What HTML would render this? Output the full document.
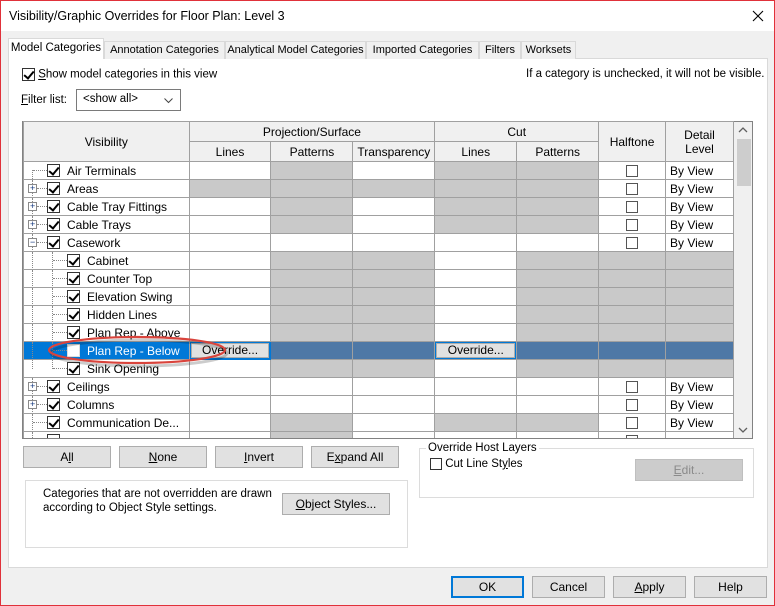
<!DOCTYPE html>
<html><head><meta charset="utf-8"><style>
*{box-sizing:border-box;margin:0;padding:0}
body{width:775px;height:606px;overflow:hidden;background:#f0f0f0;font-family:"Liberation Sans",sans-serif;font-size:12px;color:#000;position:relative}
.abs{position:absolute}
#frame{position:absolute;left:0;top:0;width:775px;height:606px;border:1px solid #e0313a;pointer-events:none;z-index:10}
#title{left:0;top:0;width:775px;height:31px;background:#fff;padding:9px 0 0 9px;font-size:12.5px}
.tab{position:absolute;top:41px;height:18px;border:1px solid #d9d9d9;border-bottom:none;background:#f0f0f0;font-size:11px;text-align:center;line-height:16px;white-space:nowrap;overflow:hidden}
#panel{left:8px;top:58px;width:760px;height:510px;background:#fff;border:1px solid #d9d9d9}
.cb{display:inline-block;width:13px;height:13px;border:1px solid #333;background:#fff;position:relative;vertical-align:middle}
.cb.on::after{content:"";position:absolute;left:3px;top:0px;width:4px;height:8px;border:solid #000;border-width:0 2px 2px 0;transform:rotate(40deg)}
#clip{position:absolute;left:23px;top:121px;width:711px;height:317px;overflow:hidden}
table{border-collapse:collapse;table-layout:fixed;position:absolute;left:0;top:0}
td,th{border:1px solid #a0a0a0;height:18px;font-weight:normal;font-size:12px;padding:0;white-space:nowrap;overflow:hidden}
th{background:#f0f0f0;height:20px;text-align:center}
.h{background:repeating-conic-gradient(#a6a6a6 0 25%,#ececec 0 50%) 0 0/2px 2px}
.s{background:repeating-conic-gradient(#1f62a8 0 25%,#7d8fa3 0 50%) 0 0/2px 2px}
.vis{position:relative}
.vis .ex{position:absolute;left:4px;top:4px;width:9px;height:9px;border:1px solid #8a8a8a;background:#fff;font-size:9px;line-height:6px;text-align:center;color:#14387f}
.vis .dl{position:absolute;top:8px;border-top:1px dotted #888}
.vis .vl{position:absolute;left:8px;top:0;height:18px;border-left:1px dotted #888}
.vis .cb{position:absolute;top:2px}
.vis span.t{position:absolute;top:2px}
.hf{text-align:center}
.hf .cb{width:12px;height:12px;border-color:#555}
.dv{padding-left:4px}
.btn{position:absolute;height:22px;background:#e1e1e1;border:1px solid #adadad;text-align:center;line-height:20px;font-size:12px}
.ovr{display:block;margin:1px 1px;height:15px;background:#e1e1e1;border:1px solid #adadad;line-height:13px;text-align:center;font-size:12px}
u{text-decoration:underline}
</style></head><body>
<div class="abs" id="title">Visibility/Graphic Overrides for Floor Plan: Level 3</div>
<svg class="abs" style="left:752px;top:10px" width="12" height="12"><path d="M1 1L11 11M11 1L1 11" stroke="#000" stroke-width="1.1"/></svg>
<div id="panel" class="abs"></div>
<div class="tab" style="left:8px;top:38px;height:21px;width:96px;background:#fff;line-height:19px;font-size:11.5px;z-index:2">Model Categories</div>
<div class="tab" style="left:104px;width:121px">Annotation Categories</div>
<div class="tab" style="left:225px;width:141px">Analytical Model Categories</div>
<div class="tab" style="left:366px;width:113px">Imported Categories</div>
<div class="tab" style="left:479px;width:42px">Filters</div>
<div class="tab" style="left:521px;width:55px">Worksets</div>

<div class="abs" style="left:22px;top:68px;font-size:11.5px"><span class="cb on"></span> <u>S</u>how model categories in this view</div>
<div class="abs" style="left:526px;top:68px;font-size:11.5px">If a category is unchecked, it will not be visible.</div>
<div class="abs" style="left:21px;top:94px;font-size:11.5px"><u>F</u>ilter list:</div>
<div class="abs" style="left:76px;top:89px;width:105px;height:22px;border:1px solid #7a7a7a;background:#fff;padding:3px 0 0 6px;font-size:11.5px">&lt;show all&gt;<svg style="position:absolute;right:7px;top:8px" width="9" height="6"><path d="M0.5 0.5L4.5 4.5L8.5 0.5" stroke="#444" fill="none"/></svg></div>

<div class="abs" style="left:22px;top:121px;width:731px;height:318px;border:1px solid #828282;background:#fff"></div>
<div id="clip">
<table>
<colgroup><col style="width:166px"><col style="width:82px"><col style="width:82px"><col style="width:82px"><col style="width:82px"><col style="width:82px"><col style="width:67px"><col style="width:68px"></colgroup>
<tr><th rowspan="2" style="height:40px">Visibility</th><th colspan="3">Projection/Surface</th><th colspan="2">Cut</th><th rowspan="2">Halftone</th><th rowspan="2" style="line-height:14px">Detail<br>Level</th></tr>
<tr><th>Lines</th><th>Patterns</th><th>Transparency</th><th>Lines</th><th>Patterns</th></tr>

<tr><td class="vis"><i class="vl" style="height:9px;top:8px"></i><i class="dl" style="left:9px;width:14px"></i><i class="cb on" style="left:23px"></i><span class="t" style="left:43px">Air Terminals</span></td><td></td><td class="h"></td><td></td><td class="h"></td><td class="h"></td><td class="hf"><span class="cb"></span></td><td class="dv">By View</td></tr>
<tr><td class="vis"><i class="vl"></i><i class="dl" style="left:13px;width:10px"></i><i class="ex">+</i><i class="cb on" style="left:23px"></i><span class="t" style="left:43px">Areas</span></td><td class="h"></td><td class="h"></td><td class="h"></td><td class="h"></td><td class="h"></td><td class="hf"><span class="cb"></span></td><td class="dv">By View</td></tr>
<tr><td class="vis"><i class="vl"></i><i class="dl" style="left:13px;width:10px"></i><i class="ex">+</i><i class="cb on" style="left:23px"></i><span class="t" style="left:43px">Cable Tray Fittings</span></td><td></td><td class="h"></td><td></td><td class="h"></td><td class="h"></td><td class="hf"><span class="cb"></span></td><td class="dv">By View</td></tr>
<tr><td class="vis"><i class="vl"></i><i class="dl" style="left:13px;width:10px"></i><i class="ex">+</i><i class="cb on" style="left:23px"></i><span class="t" style="left:43px">Cable Trays</span></td><td></td><td class="h"></td><td></td><td class="h"></td><td class="h"></td><td class="hf"><span class="cb"></span></td><td class="dv">By View</td></tr>
<tr><td class="vis"><i class="vl"></i><i class="dl" style="left:13px;width:10px"></i><i class="ex">−</i><i class="cb on" style="left:23px"></i><span class="t" style="left:43px">Casework</span></td><td></td><td></td><td></td><td></td><td></td><td class="hf"><span class="cb"></span></td><td class="dv">By View</td></tr>

<tr><td class="vis"><i class="vl"></i><i class="vl" style="left:28px"></i><i class="dl" style="left:29px;width:14px"></i><i class="cb on" style="left:43px"></i><span class="t" style="left:63px">Cabinet</span></td><td></td><td class="h"></td><td class="h"></td><td></td><td class="h"></td><td class="h"></td><td class="h"></td></tr>
<tr><td class="vis"><i class="vl"></i><i class="vl" style="left:28px"></i><i class="dl" style="left:29px;width:14px"></i><i class="cb on" style="left:43px"></i><span class="t" style="left:63px">Counter Top</span></td><td></td><td class="h"></td><td class="h"></td><td></td><td class="h"></td><td class="h"></td><td class="h"></td></tr>
<tr><td class="vis"><i class="vl"></i><i class="vl" style="left:28px"></i><i class="dl" style="left:29px;width:14px"></i><i class="cb on" style="left:43px"></i><span class="t" style="left:63px">Elevation Swing</span></td><td></td><td class="h"></td><td class="h"></td><td></td><td class="h"></td><td class="h"></td><td class="h"></td></tr>
<tr><td class="vis"><i class="vl"></i><i class="vl" style="left:28px"></i><i class="dl" style="left:29px;width:14px"></i><i class="cb on" style="left:43px"></i><span class="t" style="left:63px">Hidden Lines</span></td><td></td><td class="h"></td><td class="h"></td><td></td><td class="h"></td><td class="h"></td><td class="h"></td></tr>
<tr><td class="vis"><i class="vl"></i><i class="vl" style="left:28px"></i><i class="dl" style="left:29px;width:14px"></i><i class="cb on" style="left:43px"></i><span class="t" style="left:63px">Plan Rep - Above</span></td><td></td><td class="h"></td><td class="h"></td><td></td><td class="h"></td><td class="h"></td><td class="h"></td></tr>
<tr style="background:#0078d7"><td class="vis" style="background:#0078d7;color:#fff"><i class="vl"></i><i class="vl" style="left:28px"></i><i class="dl" style="left:29px;width:14px"></i><i class="cb" style="left:43px;border-color:#ddd"></i><span class="t" style="left:63px">Plan Rep - Below</span></td><td style="background:#0078d7;border-color:#0078d7"><span class="ovr">Override...</span></td><td class="s"></td><td class="s"></td><td style="background:#0078d7"><span class="ovr">Override...</span></td><td class="s"></td><td class="s"></td><td class="s"></td></tr>
<tr><td class="vis"><i class="vl" style="height:9px"></i><i class="vl" style="left:28px;height:9px"></i><i class="dl" style="left:29px;width:14px"></i><i class="cb on" style="left:43px"></i><span class="t" style="left:63px">Sink Opening</span></td><td></td><td class="h"></td><td class="h"></td><td></td><td class="h"></td><td class="h"></td><td class="h"></td></tr>

<tr><td class="vis"><i class="vl"></i><i class="dl" style="left:13px;width:10px"></i><i class="ex">+</i><i class="cb on" style="left:23px"></i><span class="t" style="left:43px">Ceilings</span></td><td></td><td></td><td></td><td></td><td></td><td class="hf"><span class="cb"></span></td><td class="dv">By View</td></tr>
<tr><td class="vis"><i class="vl"></i><i class="dl" style="left:13px;width:10px"></i><i class="ex">+</i><i class="cb on" style="left:23px"></i><span class="t" style="left:43px">Columns</span></td><td></td><td></td><td></td><td></td><td></td><td class="hf"><span class="cb"></span></td><td class="dv">By View</td></tr>
<tr><td class="vis"><i class="vl"></i><i class="dl" style="left:9px;width:14px"></i><i class="cb on" style="left:23px"></i><span class="t" style="left:43px">Communication De...</span></td><td></td><td class="h"></td><td></td><td class="h"></td><td class="h"></td><td class="hf"><span class="cb"></span></td><td class="dv">By View</td></tr>
<tr><td class="vis"><i class="vl"></i><i class="cb" style="left:23px"></i></td><td></td><td class="h"></td><td></td><td></td><td></td><td class="hf"><span class="cb"></span></td><td></td></tr>
</table>
</div>
<div class="abs" style="left:22px;top:438px;width:731px;height:1px;background:#828282"></div>
<div class="abs" style="left:22px;top:122px;width:1px;height:316px;background:#828282"></div>
<div class="abs" style="left:734px;top:122px;width:18px;height:316px;background:#f0f0f0"></div>
<div class="abs" style="left:737px;top:139px;width:14px;height:47px;background:#cdcdcd"></div>
<svg class="abs" style="left:738px;top:127px" width="10" height="6"><path d="M1 5L5 1L9 5" stroke="#606060" fill="none" stroke-width="1.3"/></svg>
<svg class="abs" style="left:738px;top:427px" width="10" height="6"><path d="M1 1L5 5L9 1" stroke="#606060" fill="none" stroke-width="1.3"/></svg>

<svg class="abs" style="left:40px;top:330px" width="240" height="45"><ellipse cx="97" cy="20" rx="88" ry="13" fill="none" stroke="rgba(0,0,0,0.2)" stroke-width="3" transform="translate(2,3)"/><ellipse cx="97" cy="20" rx="88" ry="13" fill="none" stroke="#d9443c" stroke-width="2.2"/></svg>

<div class="btn" style="left:23px;top:446px;width:88px">A<u>l</u>l</div>
<div class="btn" style="left:119px;top:446px;width:88px"><u>N</u>one</div>
<div class="btn" style="left:215px;top:446px;width:88px"><u>I</u>nvert</div>
<div class="btn" style="left:311px;top:446px;width:88px">E<u>x</u>pand All</div>

<div class="abs" style="left:25px;top:480px;width:383px;height:68px;border:1px solid #dcdcdc"></div>
<div class="abs" style="left:43px;top:487px;line-height:14px;font-size:11.5px">Categories that are not overridden are drawn<br>according to Object Style settings.</div>
<div class="btn" style="left:282px;top:493px;width:108px"><u>O</u>bject Styles...</div>

<div class="abs" style="left:419px;top:448px;width:335px;height:50px;border:1px solid #dcdcdc"></div>
<div class="abs" style="left:426px;top:442px;background:#fff;padding:0 2px;font-size:11.5px">Override Host Layers</div>
<div class="abs" style="left:430px;top:458px;font-size:11.5px"><span class="cb" style="width:12px;height:12px"></span> Cut Line St<u>y</u>les</div>
<div class="btn" style="left:635px;top:459px;width:108px;background:#cccccc;border-color:#bfbfbf;color:#8a8a8a"><u>E</u>dit...</div>

<div class="btn" style="left:451px;top:576px;width:73px;border:2px solid #0078d7;line-height:18px">OK</div>
<div class="btn" style="left:532px;top:576px;width:73px">Cancel</div>
<div class="btn" style="left:613px;top:576px;width:73px"><u>A</u>pply</div>
<div class="btn" style="left:694px;top:576px;width:73px">Help</div>
<div id="frame"></div>
</body></html>
